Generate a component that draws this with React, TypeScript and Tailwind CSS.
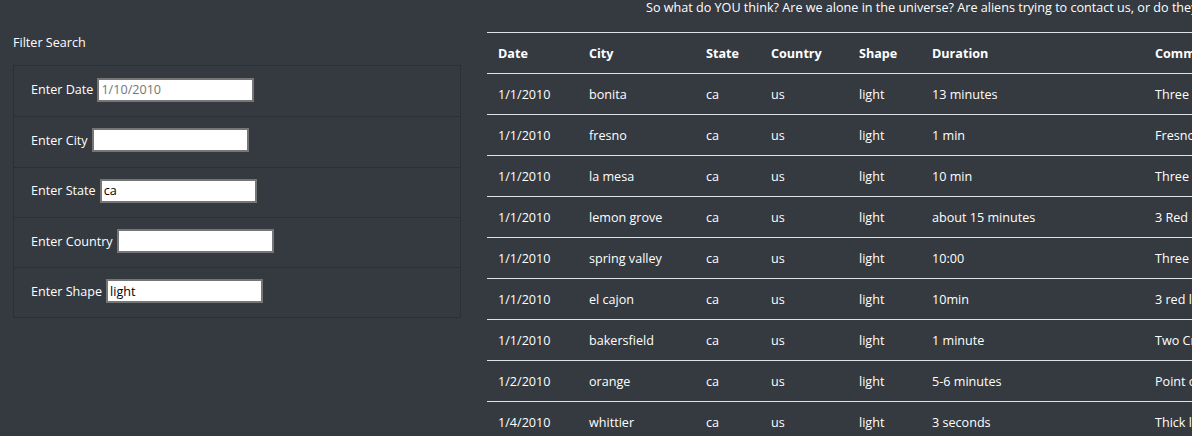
import React from "react";

type Sighting = {
  date: string;
  city: string;
  state: string;
  country: string;
  shape: string;
  duration: string;
  comments: string;
};

const rows: Sighting[] = [
  { date: "1/1/2010", city: "bonita", state: "ca", country: "us", shape: "light", duration: "13 minutes", comments: "Three bright red lights witnessed floating stationary over San Diego New Years Eve" },
  { date: "1/1/2010", city: "fresno", state: "ca", country: "us", shape: "light", duration: "1 min", comments: "Fresno, CA, lights moving slowly across the night sky, then vanishing" },
  { date: "1/1/2010", city: "la mesa", state: "ca", country: "us", shape: "light", duration: "10 min", comments: "Three orange lights in a triangle formation heading east" },
  { date: "1/1/2010", city: "lemon grove", state: "ca", country: "us", shape: "light", duration: "about 15 minutes", comments: "3 Red lights hovering in the sky, then moving away one by one" },
  { date: "1/1/2010", city: "spring valley", state: "ca", country: "us", shape: "light", duration: "10:00", comments: "Three red orange lights moving from west to east" },
  { date: "1/1/2010", city: "el cajon", state: "ca", country: "us", shape: "light", duration: "10min", comments: "3 red lights in a line, slowly fading out" },
  { date: "1/1/2010", city: "bakersfield", state: "ca", country: "us", shape: "light", duration: "1 minute", comments: "Two Crafts observed, glowing orange, flying low and silent" },
  { date: "1/2/2010", city: "orange", state: "ca", country: "us", shape: "light", duration: "5-6 minutes", comments: "Point of light moving erratically, then shooting upward" },
  { date: "1/4/2010", city: "whittier", state: "ca", country: "us", shape: "light", duration: "3 seconds", comments: "Thick light beam seen crossing the sky" },
];

const filters = [
  { label: "Enter Date", placeholder: "1/10/2010", value: "" },
  { label: "Enter City", placeholder: "", value: "" },
  { label: "Enter State", placeholder: "", value: "ca" },
  { label: "Enter Country", placeholder: "", value: "" },
  { label: "Enter Shape", placeholder: "", value: "light" },
];

export default function App() {
  return (
    <div
      className="w-[1192px] h-[436px] overflow-hidden bg-[#343a40] text-white text-[12.6px] leading-[19px]"
      style={{ fontFamily: '"Open Sans", "Noto Sans", sans-serif' }}
    >
      <div className="flex w-[1500px]">
        {/* filter panel */}
        <div className="w-[487px] shrink-0 pl-[13px] pt-[32px]">
          <div className="h-[20px] flex items-center">Filter Search</div>
          <ul className="mt-[13px] w-[448px] border border-[#2b3035]">
            {filters.map((f, i) => (
              <li
                key={f.label}
                className={`h-[50.3px] flex items-center pl-[17px] pb-[3px] ${i > 0 ? "border-t border-[#2b3035]" : ""}`}
              >
                <label className="mr-[4px]">{f.label}</label>
                <input
                  className="w-[157px] h-[24px] bg-white border-2 border-[#767676] px-[2px] text-black placeholder:text-[#757575] text-[12.6px] outline-none"
                  placeholder={f.placeholder}
                  defaultValue={f.value}
                />
              </li>
            ))}
          </ul>
        </div>

        {/* table */}
        <div className="flex-1">
          <div className="h-[32px] pl-[159px] whitespace-nowrap leading-[16px]">
            So what do YOU think? Are we alone in the universe? Are aliens trying to contact us, or do they walk among us?
          </div>
          <table className="table-fixed w-[1000px] border-collapse text-left">
            <thead>
              <tr className="border-t border-[#dee2e6] h-[41px]">
                <th className="w-[91px] pl-[11px] font-bold">Date</th>
                <th className="w-[117px] pl-[11px] font-bold">City</th>
                <th className="w-[65px] pl-[11px] font-bold">State</th>
                <th className="w-[88px] pl-[11px] font-bold">Country</th>
                <th className="w-[73px] pl-[11px] font-bold">Shape</th>
                <th className="w-[223px] pl-[11px] font-bold">Duration</th>
                <th className="pl-[11px] font-bold">Comments</th>
              </tr>
            </thead>
            <tbody>
              {rows.map((r, i) => (
                <tr key={i} className="border-t border-[#dee2e6] h-[41px]">
                  <td className="pl-[11px]">{r.date}</td>
                  <td className="pl-[11px]">{r.city}</td>
                  <td className="pl-[11px]">{r.state}</td>
                  <td className="pl-[11px]">{r.country}</td>
                  <td className="pl-[11px]">{r.shape}</td>
                  <td className="pl-[11px]">{r.duration}</td>
                  <td className="pl-[11px] whitespace-nowrap">{r.comments}</td>
                </tr>
              ))}
            </tbody>
          </table>
        </div>
      </div>
    </div>
  );
}
